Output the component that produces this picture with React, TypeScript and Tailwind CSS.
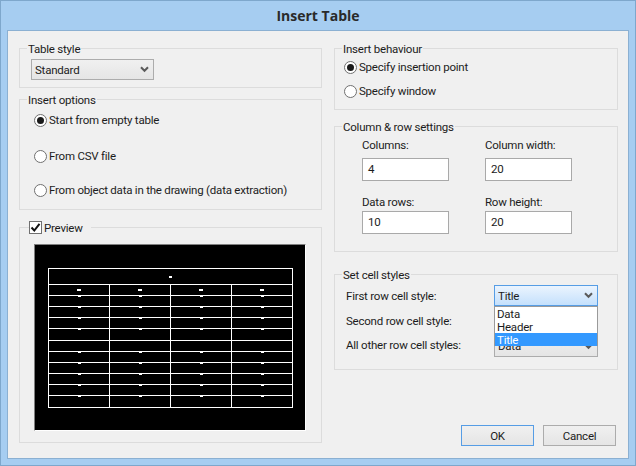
import React from "react";

const rowLines = [0, 16, 27, 38, 49, 60, 72, 83, 94, 105, 116, 127, 139];
const colLines = [0, 61, 122, 183, 244];
const markCols = [30, 91, 152, 213];
const markRows = [28, 39, 50, 61, 84, 95, 106, 117, 128];

function Radio({ label, checked }: { label: string; checked?: boolean }) {
  return (
    <div className="flex items-center h-[14px] gap-[2px] whitespace-nowrap">
      <span className="w-[13px] h-[13px] rounded-full border border-[#707070] bg-white flex items-center justify-center shrink-0">
        {checked && <span className="w-[7px] h-[7px] rounded-full bg-[#1a1a1a]" />}
      </span>
      <span>{label}</span>
    </div>
  );
}

function Chevron() {
  return (
    <svg width="9" height="7" viewBox="0 0 9 7" className="shrink-0">
      <path d="M1 1.2 L4.5 4.8 L8 1.2" fill="none" stroke="#5a5a5a" strokeWidth="2" />
    </svg>
  );
}

function Select({ value, className, focused }: { value: string; className: string; focused?: boolean }) {
  return (
    <div
      className={
        focused
          ? `flex items-center justify-between pl-[3px] pr-[4px] border border-[#569de5] bg-gradient-to-b from-[#ebf4fe] to-[#c4e0fc] ${className}`
          : `flex items-center justify-between pl-[3px] pr-[4px] border border-[#acacac] bg-gradient-to-b from-[#f0f0f0] to-[#e5e5e5] ${className}`
      }
    >
      <span>{value}</span>
      <Chevron />
    </div>
  );
}

function Field({ label, value, labelGap }: { label: string; value: string; labelGap: string }) {
  return (
    <div>
      <div className={`h-[14px] leading-[14px] ${labelGap}`}>{label}</div>
      <div className="w-[87px] h-[23px] border border-[#a9a9a9] bg-white pl-[5px] leading-[21px]">{value}</div>
    </div>
  );
}

function PreviewTable() {
  return (
    <svg width="270" height="185" viewBox="0 0 270 185" className="block" shapeRendering="crispEdges">
      <g transform="translate(13 23)" fill="#fff">
        {rowLines.map((y) => (
          <rect key={y} x="0" y={y} width="245" height="1" />
        ))}
        <rect x="0" y="0" width="1" height="140" />
        <rect x="244" y="0" width="1" height="140" />
        {colLines.slice(1, 4).map((x) => (
          <rect key={x} x={x} y="16" width="1" height="124" />
        ))}
        <rect x="121" y="8" width="3" height="2" />
        {markCols.map((x) => (
          <rect key={x} x={x - 1} y="21" width="4" height="2" />
        ))}
        {markCols.map((x) =>
          markRows.map((y) => <rect key={`${x}-${y}`} x={x} y={y} width="3" height="1" />)
        )}
      </g>
    </svg>
  );
}

export default function App() {
  return (
    <div className="w-[636px] h-[466px] bg-[#a6cdf1] border border-[#7ea7cc] px-[6px] flex flex-col font-['Roboto','Liberation_Sans',sans-serif] text-[11.5px] tracking-[-0.22px] leading-[14px] text-[#1c1c1c] overflow-hidden">
      <div className="h-[29px] shrink-0 flex items-center justify-center font-['Open_Sans','Liberation_Sans',sans-serif] font-bold text-[14px] tracking-normal text-[#2a2a2a]">
        Insert Table
      </div>
      <div className="w-[622px] h-[429px] shrink-0 bg-[#f0f0f0] border border-[#8bb0d2] pl-[11px] pt-[10px] flex gap-[12px]">
        {/* left column */}
        <div className="w-[303px] flex flex-col">
          <fieldset className="h-[47px] border border-[#dcdcdc]">
            <legend className="ml-[7px] px-px h-[14px] leading-[16px]">Table style</legend>
            <Select value="Standard" className="ml-[11px] mt-[4px] w-[123px] h-[21px]" />
          </fieldset>
          <fieldset className="h-[118px] mt-[4px] border border-[#dcdcdc]">
            <legend className="ml-[7px] px-px h-[14px] leading-[16px]">Insert options</legend>
            <div className="pl-[14px] pt-[7px]">
              <Radio label="Start from empty table" checked />
              <div className="mt-[22px]">
                <Radio label="From CSV file" />
              </div>
              <div className="mt-[20px]">
                <Radio label="From object data in the drawing (data extraction)" />
              </div>
            </div>
          </fieldset>
          <fieldset className="h-[223px] mt-[10px] border border-[#dcdcdc]">
            <legend className="ml-[9px] pr-[8px] h-[14px] flex items-center gap-[2px]">
              <span className="w-[13px] h-[13px] border border-[#707070] bg-white flex items-center justify-center">
                <svg width="11" height="11" viewBox="0 0 11 11">
                  <path d="M1.5 5.5 L4.3 8.5 L9.5 1.8" fill="none" stroke="#111" strokeWidth="2" />
                </svg>
              </span>
              <span className="h-[14px] leading-[16px]">Preview</span>
            </legend>
            <div className="ml-[14px] mt-[10px] w-[272px] h-[187px] bg-black border-t border-l border-t-[#7f7f7f] border-l-[#7f7f7f] border-r border-b border-r-white border-b-white">
              <PreviewTable />
            </div>
          </fieldset>
        </div>

        {/* right column */}
        <div className="w-[284px] flex flex-col">
          <fieldset className="h-[69px] border border-[#dcdcdc]">
            <legend className="ml-[7px] px-px h-[14px] leading-[16px]">Insert behaviour</legend>
            <div className="pl-[9px] pt-[5px]">
              <Radio label="Specify insertion point" checked />
              <div className="mt-[10px]">
                <Radio label="Specify window" />
              </div>
            </div>
          </fieldset>
          <fieldset className="h-[133px] mt-[9px] border border-[#dcdcdc]">
            <legend className="ml-[7px] px-px h-[14px] leading-[16px]">Column &amp; row settings</legend>
            <div className="pl-[27px] pt-[5px] grid grid-cols-[123px_87px] gap-y-[14px]">
              <Field label="Columns:" value="4" labelGap="mb-[6px]" />
              <Field label="Column width:" value="20" labelGap="mb-[6px]" />
              <Field label="Data rows:" value="10" labelGap="mb-[2px]" />
              <Field label="Row height:" value="20" labelGap="mb-[2px]" />
            </div>
          </fieldset>
          <fieldset className="h-[103px] mt-[15px] border border-[#dcdcdc]">
            <legend className="ml-[7px] px-px h-[14px] leading-[16px]">Set cell styles</legend>
            <div className="relative flex flex-col gap-[4px] ml-[11px] mt-[4px]">
              <div className="flex items-center h-[21px]">
                <span className="w-[148px]">First row cell style:</span>
                <Select value="Title" focused className="w-[104px] h-[21px]" />
              </div>
              <div className="flex items-center h-[21px]">
                <span className="w-[148px]">Second row cell style:</span>
              </div>
              <div className="flex items-center h-[22px]">
                <span className="w-[148px] -mt-[3px]">All other row cell styles:</span>
                <Select value="Data" className="w-[104px] h-[22px]" />
              </div>
              <div className="absolute left-[148px] top-[21px] w-[104px] h-[40px] bg-white border border-[#9a9a9a] leading-[15px]">
                <div className="h-[13px] pl-[2px]">Data</div>
                <div className="h-[13px] pl-[2px]">Header</div>
                <div className="h-[13px] pl-[2px] bg-[#3399ff] text-white">Title</div>
              </div>
            </div>
          </fieldset>
          <div className="mt-[55px] pr-[2px] flex justify-end gap-[9px]">
            <button className="w-[73px] h-[21px] border border-[#569de5] bg-gradient-to-b from-[#f0f0f0] to-[#e5e5e5]">OK</button>
            <button className="w-[73px] h-[21px] border border-[#acacac] bg-gradient-to-b from-[#f0f0f0] to-[#e5e5e5]">Cancel</button>
          </div>
        </div>
      </div>
    </div>
  );
}
